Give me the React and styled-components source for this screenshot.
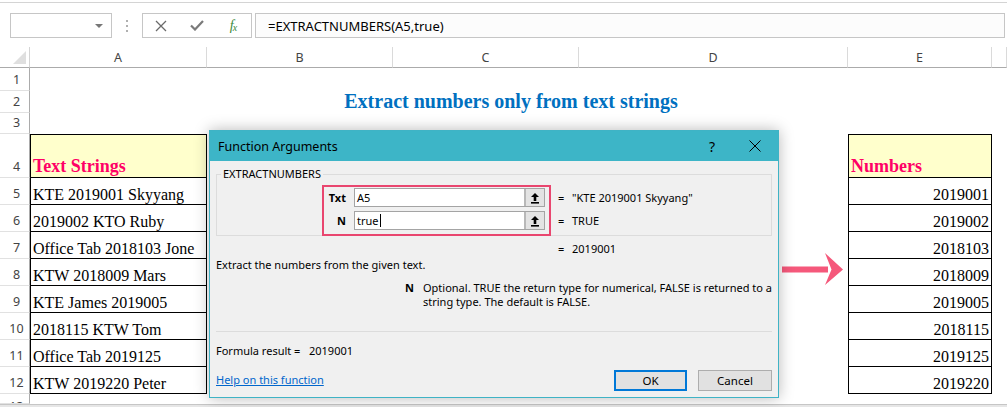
import React from 'react';
import styled, { createGlobalStyle, css } from 'styled-components';

const UI = '"Noto Sans", "Liberation Sans", Arial, sans-serif';
const SERIF = '"Liberation Serif", "Times New Roman", serif';

const GlobalStyle = createGlobalStyle`
  html, body { margin: 0; padding: 0; background: #fff; }
  body { font-family: ${UI}; overflow: hidden; }
  * { box-sizing: border-box; }
`;

const Page = styled.div`
  position: relative;
  width: 1007px;
  height: 407px;
  overflow: hidden;
  background: #fff;
`;

const TopStrip = styled.div`
  height: 3px;
  border-bottom: 1px solid #d4d4d4;
`;

const FormulaBar = styled.div`
  display: flex;
  align-items: stretch;
  height: 25px;
  margin: 10px 2px 9px 10px;
`;

const NameBox = styled.div`
  width: 102px;
  border: 1px solid #c6c6c6;
  display: flex;
  align-items: center;
  justify-content: flex-end;
  padding-right: 8px;
`;

const DropTriangle = styled.span`
  width: 0;
  height: 0;
  border-left: 4px solid transparent;
  border-right: 4px solid transparent;
  border-top: 4px solid #777;
`;

const Dots = styled.div`
  width: 30px;
  display: flex;
  flex-direction: column;
  align-items: center;
  justify-content: center;
  gap: 3px;
  span {
    width: 2px;
    height: 2px;
    background: #b0b0b0;
  }
`;

const FxButtons = styled.div`
  width: 110px;
  border: 1px solid #c6c6c6;
  display: grid;
  grid-template-columns: repeat(3, 36px);
  align-items: center;
  justify-items: center;
`;

const FxLabel = styled.span`
  font-family: ${SERIF};
  font-style: italic;
  font-size: 14px;
  color: #3a8a3a;
  letter-spacing: -1px;
  sub {
    font-size: 10px;
    vertical-align: -1px;
  }
`;

const FormulaInput = styled.div`
  flex: 1;
  margin-left: 3px;
  border: 1px solid #c6c6c6;
  background: #fcfcfc;
  display: flex;
  align-items: center;
  padding-left: 12px;
  font-size: 13px;
  color: #000;
`;

const Sheet = styled.div`
  display: grid;
  grid-template-columns: 30px 177px 186px 186px 269px 144px 1fr;
  grid-template-rows: 21px 23px 22px 21px 44px repeat(8, 27px) 10px;
`;

const Corner = styled.div`
  position: relative;
  border-right: 1px solid #d4d4d4;
  border-bottom: 1px solid #ababab;
  &::after {
    content: '';
    position: absolute;
    right: 3px;
    bottom: 3px;
    border-left: 13px solid transparent;
    border-bottom: 13px solid #dfdfdf;
  }
`;

const ColHead = styled.div`
  display: flex;
  align-items: center;
  justify-content: center;
  border-right: 1px solid #dadada;
  border-bottom: 1px solid #ababab;
  font-size: 12.5px;
  color: #444;
`;

const RowHead = styled.div`
  display: flex;
  align-items: ${p => (p.$cut ? 'flex-start' : 'flex-end')};
  justify-content: center;
  padding: ${p => (p.$cut ? '4px 0 0 4px' : '0 0 1px 4px')};
  overflow: hidden;
  border-right: 1px solid #ababab;
  border-bottom: 1px solid #e1e1e1;
  font-size: 12.5px;
  line-height: 18px;
  color: #444;
`;

const Cell = styled.div`
  display: flex;
  align-items: flex-end;
  justify-content: ${p => (p.$right ? 'flex-end' : 'flex-start')};
  padding: 0 2px;
  overflow: hidden;
  white-space: nowrap;
  font-family: ${SERIF};
  font-size: 16px;
  line-height: 18px;
  color: #000;
  background: ${p => (p.$head ? '#ffffcc' : 'transparent')};
  ${p =>
    p.$boxed &&
    css`
      border: 1px solid #000;
      border-top-width: ${p.$head ? 1 : 0}px;
    `}
  ${p =>
    p.$head &&
    css`
      font-weight: bold;
      font-size: 18px;
      line-height: 21px;
      color: #ff0066;
    `}
`;

const TitleCell = styled.div`
  grid-column: 2 / 7;
  display: flex;
  align-items: flex-end;
  justify-content: center;
  font-family: ${SERIF};
  font-weight: bold;
  font-size: 20px;
  line-height: 23px;
  color: #0070c0;
`;

const BottomBar = styled.div`
  height: 3px;
  border-top: 1px solid #c6c6c6;
  background: #e6e6e6;
`;

const Arrow = styled.svg`
  position: absolute;
  left: 782px;
  top: 253px;
`;

/* dialog */

const Dialog = styled.div`
  position: absolute;
  left: 209px;
  top: 130px;
  width: 570px;
  height: 268px;
  border: 1px solid #3fb3c5;
  background: #f0f0f0;
  box-shadow: 0 0 14px rgba(0, 0, 0, 0.28);
  font-family: ${UI};
  font-size: 11px;
  color: #000;
`;

const TitleBar = styled.div`
  height: 30px;
  background: #3db5c7;
  display: flex;
  align-items: center;
  padding-left: 8px;
  font-size: 12.5px;
`;

const TitleText = styled.div`
  flex: 1;
`;

const TitleButton = styled.div`
  width: ${p => p.$w}px;
  height: 30px;
  display: flex;
  align-items: center;
  justify-content: center;
  font-size: 14px;
`;

const Body = styled.div`
  padding: 0 6px 8px;
  display: flex;
  flex-direction: column;
  height: 236px;
`;

const GroupBox = styled.div`
  position: relative;
  margin-top: 13px;
  border: 1px solid #dcdcdc;
  border-bottom: 0;
  padding: 10px 0 0 105px;
  display: flex;
  align-items: flex-start;
`;

const Legend = styled.span`
  position: absolute;
  left: 4px;
  top: -9px;
  padding: 0 2px;
  background: #f0f0f0;
  line-height: 16px;
`;

const Highlight = styled.div`
  border: 2px solid #e9466f;
  padding: 1px 4px 4px 0;
  display: flex;
  flex-direction: column;
  gap: 4px;
`;

const ArgRow = styled.div`
  display: flex;
  align-items: center;
  height: 19px;
  gap: 8px;
`;

const ArgLabel = styled.span`
  width: 22px;
  text-align: right;
  font-weight: bold;
`;

const InputBox = styled.div`
  width: 191px;
  height: 19px;
  display: flex;
  border: 1px solid #a4a4a4;
  background: #fff;
`;

const InputText = styled.div`
  flex: 1;
  display: flex;
  align-items: center;
  padding-left: 2px;
`;

const Caret = styled.span`
  display: inline-block;
  width: 1px;
  height: 13px;
  background: #000;
  margin-left: 1px;
`;

const CollapseBtn = styled.div`
  width: 20px;
  display: flex;
  align-items: center;
  justify-content: center;
  background: #e3e3e3;
  border-left: 2px solid #b8b8b8;
`;

const Values = styled.div`
  margin-left: 7px;
  padding-top: 3px;
  display: flex;
  flex-direction: column;
  gap: 4px;
`;

const ValueRow = styled.div`
  display: flex;
  align-items: center;
  height: ${p => p.$h || 19}px;
  padding-left: ${p => p.$indent || 0}px;
  margin-top: ${p => p.$mt || 0}px;
  white-space: nowrap;
`;

const Eq = styled.span`
  width: 14px;
`;

const GroupEdge = styled.div`
  border-top: 1px solid #dcdcdc;
  margin-top: -1px;
`;

const Description = styled.div`
  margin-top: 3px;
  line-height: 14px;
`;

const ParamHelp = styled.div`
  margin-top: 9px;
  padding-left: 189px;
  display: flex;
  line-height: 14px;
`;

const ParamName = styled.span`
  width: 18px;
  flex-shrink: 0;
  font-weight: bold;
`;

const Separator = styled.div`
  margin-top: auto;
  border-top: 1px solid #dcdcdc;
`;

const Footer = styled.div`
  display: flex;
  align-items: flex-end;
  justify-content: space-between;
  padding-top: 12px;
`;

const FooterLeft = styled.div`
  display: flex;
  flex-direction: column;
  gap: 15px;
  padding-bottom: 2px;
  line-height: 14px;
`;

const HelpLink = styled.a`
  color: #0066cc;
  text-decoration: underline;
`;

const Buttons = styled.div`
  display: flex;
  gap: 11px;
  margin-bottom: -2px;
`;

const Button = styled.div`
  width: ${p => p.$w}px;
  height: 21px;
  display: flex;
  align-items: center;
  justify-content: center;
  background: #e1e1e1;
  border: ${p => (p.$primary ? '2px solid #0078d7' : '1px solid #adadad')};
  font-size: 11.5px;
`;

const UpIcon = () => (
  <svg width="10" height="12" viewBox="0 0 10 12">
    <path d="M5 1 L9 5 H6.3 V9 H3.7 V5 H1 Z" fill="#000" />
    <rect x="1" y="10" width="8" height="1.6" fill="#000" />
  </svg>
);

const rows = [
  { n: 1 },
  { n: 2, title: 'Extract numbers only from text strings' },
  { n: 3 },
  { n: 4, a: 'Text Strings', e: 'Numbers', head: true },
  { n: 5, a: 'KTE 2019001 Skyyang', e: '2019001' },
  { n: 6, a: '2019002 KTO Ruby', e: '2019002' },
  { n: 7, a: 'Office Tab 2018103 Jone', e: '2018103' },
  { n: 8, a: 'KTW 2018009 Mars', e: '2018009' },
  { n: 9, a: 'KTE James 2019005', e: '2019005' },
  { n: 10, a: '2018115 KTW Tom', e: '2018115' },
  { n: 11, a: 'Office Tab 2019125', e: '2019125' },
  { n: 12, a: 'KTW 2019220 Peter', e: '2019220' },
  { n: 13, cut: true },
];

const columns = ['A', 'B', 'C', 'D', 'E', ''];

export default function App() {
  return (
    <Page>
      <GlobalStyle />
      <TopStrip />
      <FormulaBar>
        <NameBox>
          <DropTriangle />
        </NameBox>
        <Dots>
          <span />
          <span />
          <span />
        </Dots>
        <FxButtons>
          <svg width="12" height="12" viewBox="0 0 12 12">
            <path d="M1 1 L11 11 M11 1 L1 11" stroke="#6a6a6a" strokeWidth="1.3" />
          </svg>
          <svg width="14" height="11" viewBox="0 0 14 11">
            <path d="M1 5.5 L5 9.5 L13 1" stroke="#7a7a7a" strokeWidth="2.2" fill="none" />
          </svg>
          <FxLabel>
            f<sub>x</sub>
          </FxLabel>
        </FxButtons>
        <FormulaInput>=EXTRACTNUMBERS(A5,true)</FormulaInput>
      </FormulaBar>

      <Sheet>
        <Corner />
        {columns.map((c, i) => (
          <ColHead key={i}>{c}</ColHead>
        ))}
        {rows.map(r => (
          <React.Fragment key={r.n}>
            <RowHead $cut={r.cut}>{r.n}</RowHead>
            {r.title ? (
              <>
                <TitleCell>{r.title}</TitleCell>
                <Cell />
              </>
            ) : (
              <>
                <Cell $boxed={!!r.a} $head={r.head}>
                  {r.a}
                </Cell>
                <Cell />
                <Cell />
                <Cell />
                <Cell $boxed={!!r.e} $head={r.head} $right={!r.head}>
                  {r.e}
                </Cell>
                <Cell />
              </>
            )}
          </React.Fragment>
        ))}
      </Sheet>
      <BottomBar />

      <Arrow width="62" height="33" viewBox="0 0 62 33">
        <path d="M0 13.5 H46 V19.5 H0 Z" fill="#f5587b" />
        <path d="M43 0 L61 16.5 L43 32 L49.5 16.5 Z" fill="#f5587b" />
      </Arrow>

      <Dialog>
        <TitleBar>
          <TitleText>Function Arguments</TitleText>
          <TitleButton $w={40}>?</TitleButton>
          <TitleButton $w={46}>
            <svg width="12" height="12" viewBox="0 0 12 12">
              <path d="M0.5 0.5 L11.5 11.5 M11.5 0.5 L0.5 11.5" stroke="#000" strokeWidth="1" />
            </svg>
          </TitleButton>
        </TitleBar>
        <Body>
          <GroupBox>
            <Legend>EXTRACTNUMBERS</Legend>
            <Highlight>
              <ArgRow>
                <ArgLabel>Txt</ArgLabel>
                <InputBox>
                  <InputText>A5</InputText>
                  <CollapseBtn>
                    <UpIcon />
                  </CollapseBtn>
                </InputBox>
              </ArgRow>
              <ArgRow>
                <ArgLabel>N</ArgLabel>
                <InputBox>
                  <InputText>
                    true
                    <Caret />
                  </InputText>
                  <CollapseBtn>
                    <UpIcon />
                  </CollapseBtn>
                </InputBox>
              </ArgRow>
            </Highlight>
            <Values>
              <ValueRow>
                <Eq>=</Eq>"KTE 2019001 Skyyang"
              </ValueRow>
              <ValueRow>
                <Eq>=</Eq>TRUE
              </ValueRow>
            </Values>
          </GroupBox>
          <GroupEdge />
          <ValueRow $h={14} $indent={342} $mt={5}>
            <Eq>=</Eq>2019001
          </ValueRow>
          <Description>Extract the numbers from the given text.</Description>
          <ParamHelp>
            <ParamName>N</ParamName>
            <span>
              Optional. TRUE the return type for numerical, FALSE is returned to a
              <br />
              string type. The default is FALSE.
            </span>
          </ParamHelp>
          <Separator />
          <Footer>
            <FooterLeft>
              <span>Formula result = &nbsp;&nbsp;2019001</span>
              <HelpLink>Help on this function</HelpLink>
            </FooterLeft>
            <Buttons>
              <Button $w={73} $primary>
                OK
              </Button>
              <Button $w={74}>Cancel</Button>
            </Buttons>
          </Footer>
        </Body>
      </Dialog>
    </Page>
  );
}
